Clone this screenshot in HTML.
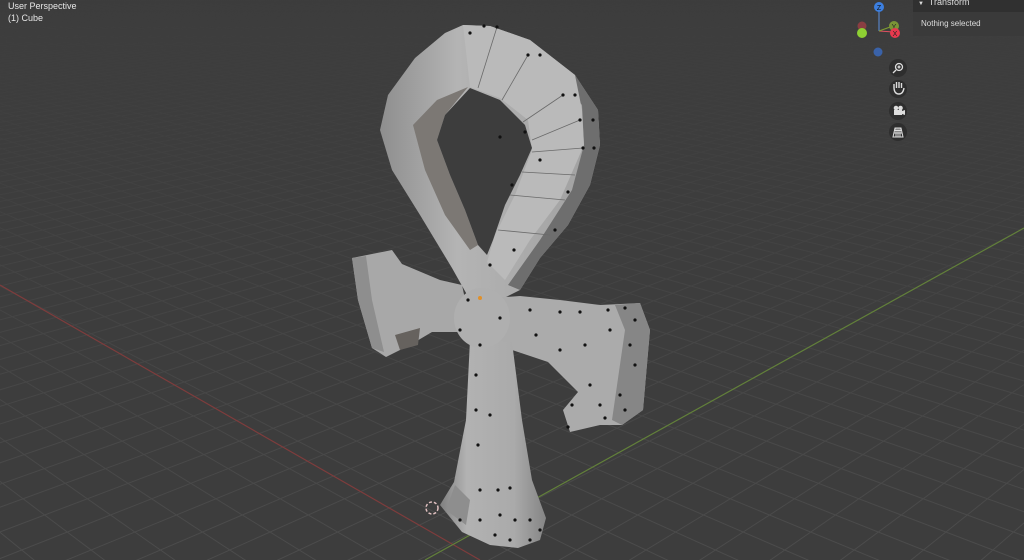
<!DOCTYPE html>
<html><head><meta charset="utf-8"><style>
html,body{margin:0;padding:0;width:1024px;height:560px;overflow:hidden;background:#3d3d3d;font-family:"Liberation Sans",sans-serif}
#v{position:absolute;left:0;top:0;overflow:hidden}
.t{position:absolute;color:#e6e6e6;font-size:9px;left:8px}
</style></head><body>
<svg id="v" width="1024" height="560" viewBox="0 0 1024 560">
<defs>
<linearGradient id="body" x1="0" y1="0" x2="1" y2="0">
<stop offset="0" stop-color="#8e8e8e"/><stop offset="0.35" stop-color="#b4b4b4"/><stop offset="1" stop-color="#a0a0a0"/></linearGradient>
<linearGradient id="stem" x1="0" y1="0" x2="1" y2="0">
<stop offset="0" stop-color="#808080"/><stop offset="0.25" stop-color="#b2b2b2"/><stop offset="0.7" stop-color="#aaaaaa"/><stop offset="1" stop-color="#858585"/></linearGradient>
<linearGradient id="fade" x1="0" y1="0" x2="0" y2="1">
<stop offset="0" stop-color="#000"/><stop offset="0.35" stop-color="#555"/><stop offset="1" stop-color="#fff"/></linearGradient>
<mask id="m"><rect width="1024" height="560" fill="url(#fade)"/></mask>
</defs>
<rect width="1024" height="560" fill="#3d3d3d"/>
<g mask="url(#m)"><g id="grid" stroke="#4c4c4c" stroke-width="1"></g></g>
<line x1="0" y1="285" x2="480" y2="560" stroke="#7e3c3c" stroke-width="1.2"/>
<line x1="1024" y1="228" x2="425" y2="560" stroke="#62803a" stroke-width="1.2"/>
<!-- left arm -->
<polygon points="352,258 392,250 402,264 440,280 462,285 472,332 432,332 410,345 386,357 372,348 358,300" fill="#a8a8a8"/>
<polygon points="352,258 366,256 372,300 384,352 372,348 358,300" fill="#8e8e8e"/>
<polygon points="395,335 420,328 418,345 400,350" fill="#66625e"/>
<!-- loop -->
<path d="M470,300 L452,268 L420,215 L392,170 L380,130 L388,95 L415,58 L445,33 L463,25 L490,26 L530,40 L575,75 L598,110 L600,145 L590,185 L568,225 L540,258 L520,290 L500,300 Z" fill="url(#body)"/>
<path d="M575,75 L598,110 L600,145 L590,185 L568,225 L540,258 L520,290 L508,285 L540,240 L572,190 L584,145 L582,105 L560,78 Z" fill="#6e6e6e"/>
<path d="M463,25 L490,26 L530,40 L575,75 L582,110 L584,145 L560,200 L530,240 L505,280 L487,262 L495,235 L515,195 L532,150 L528,120 L500,98 L470,87 Z" fill="#bababa"/>
<polygon points="413,125 437,100 468,87 445,115 437,140 450,175 465,210 478,245 470,250 445,215 425,170" fill="#7c7874"/>
<polygon points="470,88 500,100 525,125 532,148 520,175 505,205 493,240 487,255 478,245 465,210 450,175 437,140 445,115" fill="#3d3d3d"/>
<g stroke="#6a6a6a" stroke-width="0.8" fill="none">
<line x1="497" y1="27" x2="478" y2="88"/><line x1="528" y1="55" x2="502" y2="100"/><line x1="563" y1="95" x2="523" y2="122"/><line x1="580" y1="120" x2="532" y2="140"/><line x1="583" y1="148" x2="532" y2="152"/><line x1="575" y1="175" x2="522" y2="172"/><line x1="565" y1="200" x2="510" y2="195"/><line x1="550" y1="235" x2="498" y2="230"/>
<line x1="500" y1="318" x2="640" y2="320"/><line x1="505" y1="335" x2="640" y2="345"/><line x1="530" y1="310" x2="560" y2="350"/><line x1="580" y1="312" x2="585" y2="380"/><line x1="610" y1="310" x2="605" y2="410"/>
<line x1="476" y1="360" x2="482" y2="500"/><line x1="490" y1="360" x2="500" y2="520"/>
</g>
<!-- right arm -->
<polygon points="462,300 520,296 560,300 600,305 640,303 650,330 643,410 622,425 600,425 570,432 563,410 578,392 548,362 500,346 470,346" fill="#ababab"/>
<polygon points="615,305 640,303 650,330 643,410 622,425 612,420 625,330" fill="#868686"/>
<!-- stem -->
<polygon points="470,340 512,342 522,420 532,480 546,518 540,540 518,548 490,545 462,532 440,505 454,482 466,420" fill="url(#stem)"/>
<polygon points="455,485 470,500 466,525 446,510" fill="#8e8e8e"/>
<ellipse cx="482" cy="318" rx="28" ry="30" fill="#afafaf"/>
<g fill="#111">
<circle cx="470" cy="33" r="1.6"/><circle cx="484" cy="26" r="1.6"/><circle cx="497" cy="27" r="1.6"/><circle cx="528" cy="55" r="1.6"/><circle cx="540" cy="55" r="1.6"/><circle cx="563" cy="95" r="1.6"/><circle cx="575" cy="95" r="1.6"/><circle cx="580" cy="120" r="1.6"/><circle cx="593" cy="120" r="1.6"/><circle cx="583" cy="148" r="1.6"/><circle cx="594" cy="148" r="1.6"/><circle cx="568" cy="192" r="1.6"/><circle cx="555" cy="230" r="1.6"/><circle cx="500" cy="137" r="1.6"/><circle cx="525" cy="132" r="1.6"/><circle cx="540" cy="160" r="1.6"/><circle cx="512" cy="185" r="1.6"/><circle cx="514" cy="250" r="1.6"/>
<circle cx="490" cy="265" r="1.6"/><circle cx="468" cy="300" r="1.6"/><circle cx="460" cy="330" r="1.6"/><circle cx="480" cy="345" r="1.6"/><circle cx="500" cy="318" r="1.6"/><circle cx="530" cy="310" r="1.6"/><circle cx="560" cy="312" r="1.6"/><circle cx="580" cy="312" r="1.6"/><circle cx="608" cy="310" r="1.6"/><circle cx="625" cy="308" r="1.6"/><circle cx="635" cy="320" r="1.6"/><circle cx="630" cy="345" r="1.6"/><circle cx="635" cy="365" r="1.6"/><circle cx="610" cy="330" r="1.6"/><circle cx="585" cy="345" r="1.6"/><circle cx="560" cy="350" r="1.6"/><circle cx="536" cy="335" r="1.6"/><circle cx="590" cy="385" r="1.6"/><circle cx="600" cy="405" r="1.6"/><circle cx="620" cy="395" r="1.6"/><circle cx="572" cy="405" r="1.6"/><circle cx="568" cy="427" r="1.6"/><circle cx="605" cy="418" r="1.6"/><circle cx="625" cy="410" r="1.6"/>
<circle cx="476" cy="375" r="1.6"/><circle cx="476" cy="410" r="1.6"/><circle cx="490" cy="415" r="1.6"/><circle cx="478" cy="445" r="1.6"/><circle cx="480" cy="490" r="1.6"/><circle cx="498" cy="490" r="1.6"/><circle cx="510" cy="488" r="1.6"/><circle cx="460" cy="520" r="1.6"/><circle cx="480" cy="520" r="1.6"/><circle cx="500" cy="515" r="1.6"/><circle cx="515" cy="520" r="1.6"/><circle cx="530" cy="520" r="1.6"/><circle cx="510" cy="540" r="1.6"/><circle cx="530" cy="540" r="1.6"/><circle cx="540" cy="530" r="1.6"/><circle cx="495" cy="535" r="1.6"/>
</g>
<circle cx="432" cy="508" r="6" fill="none" stroke="#e0c0c0" stroke-width="1.5" stroke-dasharray="3 2"/>
<circle cx="480" cy="298" r="2" fill="#e0902a"/>
<!-- gizmo -->
<line x1="879" y1="10" x2="879" y2="31" stroke="#5b8ee0" stroke-width="1"/>
<line x1="879" y1="31" x2="893" y2="32" stroke="#e05060" stroke-width="1"/>
<line x1="879" y1="31" x2="893" y2="26" stroke="#80a030" stroke-width="1"/>
<circle cx="879" cy="7" r="5" fill="#3c7fe0"/><text x="879" y="10" font-size="7" fill="#111" text-anchor="middle" font-family="Liberation Sans">Z</text>
<circle cx="862" cy="26" r="4.5" fill="#8a3e42"/>
<circle cx="894" cy="26" r="5" fill="#7a9436"/><text x="894" y="29" font-size="7" fill="#222" text-anchor="middle" font-family="Liberation Sans">Y</text>
<circle cx="862" cy="33" r="5" fill="#8ed033"/>
<circle cx="895" cy="33" r="5" fill="#e8394e"/><text x="895" y="36" font-size="7" fill="#222" text-anchor="middle" font-family="Liberation Sans">X</text>
<circle cx="878" cy="52" r="4.5" fill="#3a62a8"/>
<g fill="#2e2e2e"><circle cx="898" cy="68" r="9"/><circle cx="898" cy="89" r="9"/><circle cx="898" cy="111" r="9"/><circle cx="898" cy="132" r="9"/></g>
<g stroke="#ddd" fill="none" stroke-width="1.3"><circle cx="899" cy="67" r="3.5"/><line x1="896" y1="70" x2="893" y2="73"/><line x1="897.5" y1="67" x2="900.5" y2="67"/><line x1="899" y1="65.5" x2="899" y2="68.5"/></g>
<path d="M894,88 v-4 M896.5,88 v-6 M899,88 v-6 M901.5,88 v-5 M894,87 q0,7 5,7 q4,0 5,-6" stroke="#ddd" fill="none" stroke-width="1.4"/>
<g fill="#ddd"><circle cx="896" cy="108" r="2.3"/><circle cx="900.5" cy="108" r="2.3"/><rect x="894" y="110" width="8" height="5"/><polygon points="902,111 905,110 905,115 902,114"/></g>
<path d="M893,137 L895,128 L901,128 L903,137 Z M894,133 h8 M896,128 v9 M898,128 v9 M900,128 v9 M894.5,130.5 h7" stroke="#ddd" fill="none" stroke-width="1"/>
</svg>
<div class="t" style="top:1px">User Perspective</div>
<div class="t" style="top:13px">(1) Cube</div>
<div style="position:absolute;left:913px;top:0;width:111px;height:36px;background:#303030"></div>
<div style="position:absolute;left:918px;top:-3px;color:#ddd;font-size:9px"><span style="font-size:6px">▼</span>&nbsp; Transform</div>
<div style="position:absolute;left:913px;top:12px;width:111px;height:24px;background:#3a3a3a"></div>
<div style="position:absolute;left:921px;top:19px;color:#ddd;font-size:8px">Nothing selected</div>
<script>
(function(){
var g=document.getElementById('grid'),ns='http://www.w3.org/2000/svg';
var O=[440,515],VR=[-839,-150],VG=[1797,-150],k=40;
function P(V,t){var s=t/(t+k);return [O[0]+(V[0]-O[0])*s,O[1]+(V[1]-O[1])*s];}
function L(a,V){var x2=a[0]+(a[0]-V[0])*2,y2=a[1]+(a[1]-V[1])*2;var l=document.createElementNS(ns,'line');l.setAttribute('x1',V[0]);l.setAttribute('y1',V[1]);l.setAttribute('x2',x2);l.setAttribute('y2',y2);g.appendChild(l);}
for(var t=-36;t<=120;t++){L(P(VR,t),VG);L(P(VG,t),VR);}
})();
</script>
</body></html>
